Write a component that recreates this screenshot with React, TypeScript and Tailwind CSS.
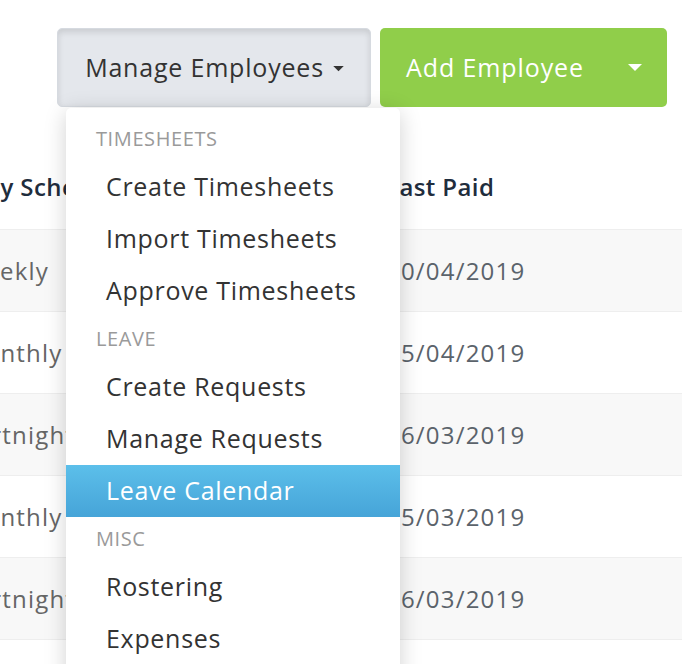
import { useState } from "react";

const rows = [
  { schedule: "Weekly", paid: "30/04/2019" },
  { schedule: "Monthly", paid: "15/04/2019" },
  { schedule: "Fortnightly", paid: "26/03/2019" },
  { schedule: "Monthly", paid: "15/03/2019" },
  { schedule: "Fortnightly", paid: "26/03/2019" },
  { schedule: "Weekly", paid: "12/03/2019" },
];

type MenuEntry = { type: "header" | "item"; label: string };

const menu: MenuEntry[] = [
  { type: "header", label: "Timesheets" },
  { type: "item", label: "Create Timesheets" },
  { type: "item", label: "Import Timesheets" },
  { type: "item", label: "Approve Timesheets" },
  { type: "header", label: "Leave" },
  { type: "item", label: "Create Requests" },
  { type: "item", label: "Manage Requests" },
  { type: "item", label: "Leave Calendar" },
  { type: "header", label: "Misc" },
  { type: "item", label: "Rostering" },
  { type: "item", label: "Expenses" },
  { type: "item", label: "Reports" },
];

function Caret({ className }: { className?: string }) {
  return (
    <svg width="14" height="8" viewBox="0 0 14 8" className={className}>
      <path d="M0 0 L14 0 L7 7 Z" fill="currentColor" />
    </svg>
  );
}

export default function App() {
  const [active, setActive] = useState("Leave Calendar");

  return (
    <div className="h-[664px] w-[682px] overflow-hidden bg-white font-['Open_Sans',sans-serif]">
      {/* Toolbar */}
      <div className="flex justify-end gap-[9px] pt-[28px] pr-[15px]">
        <div className="relative">
          <button className="flex h-[79px] w-[314px] items-center justify-center gap-[8px] rounded-[5px] border border-[#d6dae0] bg-[#e4e7ec] pl-[2px] text-[25px] font-medium tracking-[0.8px] text-[#333] shadow-[inset_0_3px_6px_rgba(0,0,0,0.12)]">
            Manage Employees
            <Caret className="mt-[2px] h-[6px] w-[13px] text-[#333]" />
          </button>

          {/* Dropdown */}
          <div className="absolute left-[9px] top-[80px] z-10 w-[334px] rounded-[5px] bg-white pt-[9px] shadow-[0_4px_22px_rgba(0,0,0,0.18)]">
            {menu.map((m) =>
              m.type === "header" ? (
                <div
                  key={m.label}
                  className="flex h-[44px] items-center pl-[30px] text-[20px] font-medium uppercase tracking-[0.6px] text-[#9a9a9a]"
                >
                  {m.label}
                </div>
              ) : (
                <div
                  key={m.label}
                  onClick={() => setActive(m.label)}
                  className={
                    m.label === active
                      ? "flex h-[52px] items-center bg-gradient-to-b from-[#5cbfea] to-[#46a4d8] pl-[40px] text-[25px] tracking-[0.7px] text-white"
                      : "flex h-[52px] items-center pl-[40px] text-[25px] tracking-[0.7px] text-[#333]"
                  }
                >
                  {m.label}
                </div>
              )
            )}
          </div>
        </div>

        <button className="flex h-[79px] w-[287px] items-center justify-between rounded-[5px] bg-[#90ce4a] pl-[26px] pr-[25px] text-[25px] font-medium tracking-[0.9px] text-white">
          Add Employee
          <Caret className="h-[8px] w-[14px] text-white" />
        </button>
      </div>

      {/* Table */}
      <div className="ml-[-38px] mt-[38px]">
        <div className="grid h-[84px] grid-cols-[424px_1fr] items-center text-[24px] font-semibold tracking-[0.4px] text-[#1f2d3d]">
          <div className="pl-[9px]">Pay Schedule</div>
          <div>Last Paid</div>
        </div>
        {rows.map((r, i) => (
          <div
            key={i}
            className={
              i % 2 === 0
                ? "grid h-[82px] grid-cols-[424px_1fr] items-center border-t border-[#eee] bg-[#f8f8f8] text-[24px] tracking-[1.2px]"
                : "grid h-[82px] grid-cols-[424px_1fr] items-center border-t border-[#eee] bg-white text-[24px] tracking-[1.2px]"
            }
          >
            <div className="text-[#666]">{r.schedule}</div>
            <div className="text-[#5b636b]">{r.paid}</div>
          </div>
        ))}
      </div>
    </div>
  );
}
